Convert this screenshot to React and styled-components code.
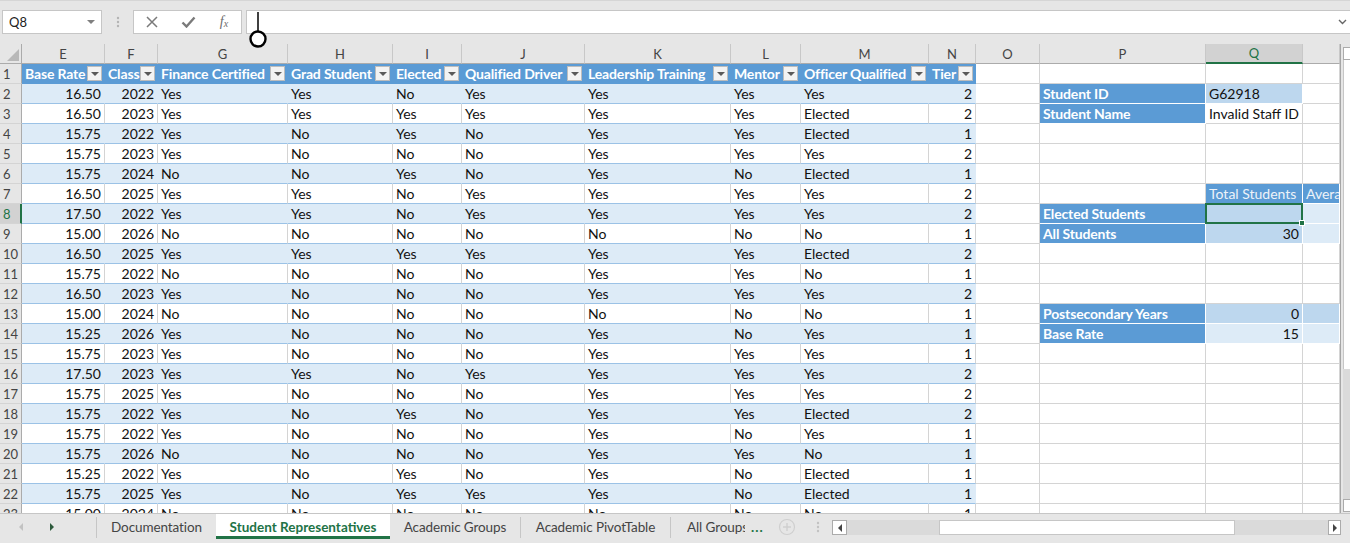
import React from 'react';
import styled, { createGlobalStyle, css } from 'styled-components';

const GlobalStyle = createGlobalStyle`
  html, body { margin: 0; padding: 0; }
  body { font-family: Lato, "Liberation Sans", sans-serif; background: #e6e6e6; }
  * { box-sizing: border-box; }
`;

const COLS = [22, 83, 53, 130, 105, 69, 123, 146, 70, 128, 47, 64, 166, 97, 37];
const LETTERS = ['E', 'F', 'G', 'H', 'I', 'J', 'K', 'L', 'M', 'N', 'O', 'P', 'Q', ''];
const HEADERS = ['Base Rate', 'Class', 'Finance Certified', 'Grad Student', 'Elected', 'Qualified Driver', 'Leadership Training', 'Mentor', 'Officer Qualified', 'Tier'];

const ROWS = [
  ['16.50', '2022', 'Yes', 'Yes', 'No', 'Yes', 'Yes', 'Yes', 'Yes', '2'],
  ['16.50', '2023', 'Yes', 'Yes', 'Yes', 'Yes', 'Yes', 'Yes', 'Elected', '2'],
  ['15.75', '2022', 'Yes', 'No', 'Yes', 'No', 'Yes', 'Yes', 'Elected', '1'],
  ['15.75', '2023', 'Yes', 'No', 'No', 'No', 'Yes', 'Yes', 'Yes', '2'],
  ['15.75', '2024', 'No', 'No', 'Yes', 'No', 'Yes', 'No', 'Elected', '1'],
  ['16.50', '2025', 'Yes', 'Yes', 'No', 'Yes', 'Yes', 'Yes', 'Yes', '2'],
  ['17.50', '2022', 'Yes', 'Yes', 'No', 'Yes', 'Yes', 'Yes', 'Yes', '2'],
  ['15.00', '2026', 'No', 'No', 'No', 'No', 'No', 'No', 'No', '1'],
  ['16.50', '2025', 'Yes', 'Yes', 'Yes', 'Yes', 'Yes', 'Yes', 'Elected', '2'],
  ['15.75', '2022', 'No', 'No', 'No', 'No', 'Yes', 'Yes', 'No', '1'],
  ['16.50', '2023', 'Yes', 'No', 'No', 'No', 'Yes', 'Yes', 'Yes', '2'],
  ['15.00', '2024', 'No', 'No', 'No', 'No', 'No', 'No', 'No', '1'],
  ['15.25', '2026', 'Yes', 'No', 'No', 'No', 'Yes', 'No', 'Yes', '1'],
  ['15.75', '2023', 'Yes', 'No', 'No', 'No', 'Yes', 'Yes', 'Yes', '1'],
  ['17.50', '2023', 'Yes', 'Yes', 'No', 'Yes', 'Yes', 'Yes', 'Yes', '2'],
  ['15.75', '2025', 'Yes', 'No', 'No', 'No', 'Yes', 'Yes', 'Yes', '2'],
  ['15.75', '2022', 'Yes', 'No', 'Yes', 'No', 'Yes', 'Yes', 'Elected', '2'],
  ['15.75', '2022', 'Yes', 'No', 'No', 'No', 'Yes', 'No', 'Yes', '1'],
  ['15.75', '2026', 'No', 'No', 'No', 'No', 'Yes', 'Yes', 'No', '1'],
  ['15.25', '2022', 'Yes', 'No', 'Yes', 'No', 'Yes', 'No', 'Elected', '1'],
  ['15.75', '2025', 'Yes', 'No', 'Yes', 'Yes', 'Yes', 'No', 'Elected', '1'],
  ['15.00', '2024', 'No', 'No', 'No', 'No', 'No', 'No', 'No', '1'],
];
const NUMERIC = [0, 1, 9];

/* ---------- window & formula bar ---------- */
const Window = styled.div`
  position: relative;
  width: 1350px;
  height: 543px;
  display: flex;
  flex-direction: column;
  overflow: hidden;
  background: #e6e6e6;
`;

const FormulaBar = styled.div`
  height: 44px;
  flex: none;
  display: flex;
  align-items: flex-start;
  padding: 9px 0 0 2px;
  border-top: 1px solid #d6d6d6;
`;

const NameBox = styled.div`
  width: 100px;
  height: 24px;
  background: #fff;
  border: 1px solid #c6c6c6;
  display: flex;
  align-items: center;
  justify-content: space-between;
  padding: 0 6px 0 6px;
  font-size: 13px;
  color: #222;
`;

const DropTri = styled.span`
  width: 0;
  height: 0;
  border-left: 4px solid transparent;
  border-right: 4px solid transparent;
  border-top: 4px solid #7f7f7f;
`;

const Grip = styled.div`
  width: ${p => p.$w || 31}px;
  height: ${p => (p.$fill ? 'auto' : '24px')};
  display: flex;
  align-items: center;
  justify-content: center;
  flex: none;
`;

const FxBox = styled.div`
  width: 109px;
  height: 24px;
  background: #fff;
  border: 1px solid #c6c6c6;
  display: grid;
  grid-template-columns: repeat(3, 36px);
  align-items: center;
  justify-items: center;
`;

const FxText = styled.span`
  font-family: "Liberation Serif", serif;
  font-style: italic;
  font-size: 14px;
  color: #6d6d6d;
  & sub { font-size: 10px; vertical-align: -1px; }
`;

const FormulaInput = styled.div`
  flex: 1;
  height: 24px;
  margin-left: 4px;
  background: #fff;
  border: 1px solid #c6c6c6;
  border-right: none;
  display: flex;
  align-items: center;
  justify-content: flex-end;
  padding-right: 3px;
`;

const TouchCursor = styled.svg`
  position: absolute;
  left: 248px;
  top: 10px;
  pointer-events: none;
  z-index: 10;
`;

/* ---------- sheet ---------- */
const SheetArea = styled.div`
  flex: 1;
  display: flex;
  min-height: 0;
`;

const Grid = styled.div`
  display: grid;
  grid-template-columns: ${COLS.map(c => c + 'px').join(' ')};
  grid-auto-rows: 20px;
  align-content: start;
  width: 1341px;
  flex: none;
  height: 100%;
  overflow: hidden;
  background: #fff;
  border-right: 1px solid #a6a6a6;
`;

const headBase = css`
  background: #e6e6e6;
  color: #444;
  font-size: 13px;
  display: flex;
  align-items: center;
  white-space: nowrap;
`;

const Corner = styled.div`
  ${headBase};
  border-right: 1px solid #ababab;
  border-bottom: 1px solid #ababab;
  justify-content: flex-end;
  align-items: flex-end;
  padding: 0 2px 2px 0;
`;

const ColHead = styled.div`
  ${headBase};
  justify-content: center;
  border-right: 1px solid #c8c8c8;
  border-bottom: ${p => (p.$sel ? '2px solid #217346' : '1px solid #ababab')};
  ${p => p.$sel && css`background: #d2d2d2; color: #217346;`}
`;

const RowHead = styled.div`
  ${headBase};
  padding-left: 3px;
  border-bottom: 1px solid #d4d4d4;
  border-right: ${p => (p.$sel ? '2px solid #217346' : '1px solid #ababab')};
  ${p => p.$sel && css`background: #d2d2d2; color: #217346;`}
`;

const cellBase = css`
  position: relative;
  display: flex;
  align-items: center;
  padding: 0 3px;
  font-size: 14px;
  color: #111;
  white-space: nowrap;
  overflow: hidden;
  border-right: 1px solid #d4d4d4;
  border-bottom: 1px solid #d4d4d4;
  justify-content: ${p => (p.$num ? 'flex-end' : 'flex-start')};
`;

const boldText = css`
  font-weight: 700;
  font-size: 14px;
  letter-spacing: -0.15px;
  color: #fff;
`;

const Cell = styled.div`
  ${cellBase};
  background: #fff;
`;

const THead = styled.div`
  ${cellBase};
  ${boldText};
  padding-right: 2px;
  background: #5b9bd5;
  border-right-color: #5b9bd5;
  border-bottom-color: #5b9bd5;
`;

const FilterBtn = styled.span`
  width: 15px;
  height: 15px;
  flex: none;
  margin-left: auto;
  background: #f3f3f3;
  border: 1px solid #bdbdbd;
  display: flex;
  align-items: center;
  justify-content: center;
  &::after {
    content: '';
    border-left: 4px solid transparent;
    border-right: 4px solid transparent;
    border-top: 4px solid #5a5a5a;
  }
`;

const TCell = styled.div`
  ${cellBase};
  background: ${p => (p.$band ? '#ddebf7' : '#fff')};
  border-right-color: ${p => (p.$band ? '#ddebf7' : '#d4d4d4')};
  border-bottom-color: #9bc2e6;
`;

const Label = styled.div`
  ${cellBase};
  ${boldText};
  background: #5b9bd5;
  border-right-color: #fff;
  border-bottom-color: #fff;
`;

const SubHead = styled.div`
  ${cellBase};
  background: #5b9bd5;
  color: #eef3f9;
  border-right-color: #fff;
  border-bottom-color: #fff;
`;

const Val = styled.div`
  ${cellBase};
  background: ${p => (p.$tone === 'mid' ? '#bdd7ee' : '#ddebf7')};
  border-right-color: #fff;
  border-bottom-color: #fff;
  ${p => p.$sel && css`overflow: visible; z-index: 3;`}
`;

const SelectionBox = styled.span`
  position: absolute;
  left: -1px;
  top: -1px;
  right: -1px;
  bottom: -1px;
  border: 2px solid #217346;
  pointer-events: none;
`;

const FillHandle = styled.span`
  position: absolute;
  right: -3px;
  bottom: -3px;
  width: 6px;
  height: 6px;
  background: #217346;
  border: 1px solid #fff;
`;

/* vertical scrollbar */
const VScroll = styled.div`
  flex: 1;
  display: flex;
  flex-direction: column;
  padding: 3px 0 1px 2px;
`;

const VArrow = styled.div`
  height: 13px;
  flex: none;
  background: #fff;
  border: 1px solid #ababab;
  border-right: none;
`;

const VThumb = styled.div`
  height: 309px;
  flex: none;
  background: #fff;
  border-left: 1px solid #c6c6c6;
`;

const VTrack = styled.div`
  flex: 1;
  background: #dadada;
`;

/* ---------- tab bar ---------- */
const TabBar = styled.div`
  height: 30px;
  flex: none;
  display: flex;
  align-items: stretch;
  border-top: 1px solid #c6c6c6;
  padding-bottom: 4px;
  background: #e6e6e6;
`;

const TabStrip = styled.div`
  width: 832px;
  flex: none;
  display: flex;
  align-items: stretch;
  overflow: hidden;
`;

const Nav = styled.div`
  width: 96px;
  flex: none;
  display: flex;
  align-items: center;
  padding-left: 19px;
  gap: 27px;
`;

const NavTri = styled.span`
  width: 0;
  height: 0;
  border-top: 4px solid transparent;
  border-bottom: 4px solid transparent;
  ${p => (p.$dir === 'left'
    ? css`border-right: 4px solid ${p.$on ? '#2d5a3c' : '#c2c2c2'};`
    : css`border-left: 4px solid ${p.$on ? '#2d5a3c' : '#c2c2c2'};`)}
`;

const Divider = styled.span`
  width: 1px;
  flex: none;
  margin: 3px 0 1px;
  background: #c6c6c6;
`;

const Tab = styled.div`
  width: ${p => p.$w}px;
  flex: none;
  display: flex;
  align-items: center;
  justify-content: ${p => (p.$start ? 'flex-start' : 'center')};
  padding-left: ${p => (p.$start ? '16px' : '0')};
  font-size: 13.5px;
  letter-spacing: -0.1px;
  color: #444;
  white-space: nowrap;
  overflow: hidden;
  ${p => p.$active && css`
    background: #fff;
    color: #217346;
    font-weight: 700;
    letter-spacing: 0;
    border-bottom: 3px solid #217346;
    padding-top: 3px;
  `}
`;

const Clip = styled.span`
  max-width: ${p => p.$max}px;
  overflow: hidden;
`;

const More = styled.span`
  color: #217346;
  font-weight: 700;
  margin-left: 6px;
  letter-spacing: 1px;
`;

const HScroll = styled.div`
  width: 509px;
  height: 15px;
  flex: none;
  margin-top: 6px;
  display: flex;
  background: #dadada;
`;

const HArrow = styled.div`
  width: ${p => p.$w}px;
  flex: none;
  background: #fff;
  border: 1px solid #ababab;
  display: flex;
  align-items: center;
  justify-content: center;
`;

const HTrack = styled.div`
  flex: 1;
  display: flex;
  padding-left: 92px;
`;

const HThumb = styled.div`
  width: 296px;
  background: #fff;
  border: 1px solid #c6c6c6;
`;

/* ---------- icons ---------- */
const Dots = ({ color = '#b4b4b4' }) => (
  <svg width="4" height="12" viewBox="0 0 4 12">
    <circle cx="2" cy="2" r="1.2" fill={color} />
    <circle cx="2" cy="6" r="1.2" fill={color} />
    <circle cx="2" cy="10" r="1.2" fill={color} />
  </svg>
);

const Tri = ({ dir }) => (
  <svg width="6" height="8" viewBox="0 0 6 8">
    {dir === 'left' ? <path d="M5 0L1 4L5 8Z" fill="#444" /> : <path d="M1 0L5 4L1 8Z" fill="#444" />}
  </svg>
);

/* ---------- right panel ---------- */
function rightCells(r) {
  const O = <Cell key="o" />;
  switch (r) {
    case 2:
      return [O, <Label key="p">Student ID</Label>, <Val key="q" $tone="mid">G62918</Val>, <Cell key="r" />];
    case 3:
      return [O, <Label key="p">Student Name</Label>, <Cell key="q">Invalid Staff ID</Cell>, <Cell key="r" />];
    case 7:
      return [O, <Cell key="p" />, <SubHead key="q">Total Students</SubHead>, <SubHead key="r">Average Base Rate</SubHead>];
    case 8:
      return [O, <Label key="p">Elected Students</Label>,
        <Val key="q" $tone="mid" $sel><SelectionBox /><FillHandle /></Val>,
        <Val key="r" $tone="light" />];
    case 9:
      return [O, <Label key="p">All Students</Label>, <Val key="q" $tone="mid" $num>30</Val>, <Val key="r" $tone="light" />];
    case 13:
      return [O, <Label key="p">Postsecondary Years</Label>, <Val key="q" $tone="mid" $num>0</Val>, <Val key="r" $tone="mid" />];
    case 14:
      return [O, <Label key="p">Base Rate</Label>, <Val key="q" $tone="light" $num>15</Val>, <Val key="r" $tone="light" />];
    default:
      return [O, <Cell key="p" />, <Cell key="q" />, <Cell key="r" />];
  }
}

export default function App() {
  const rowNums = Array.from({ length: 23 }, (_, i) => i + 1);
  return (
    <>
      <GlobalStyle />
      <Window>
        <FormulaBar>
          <NameBox>Q8<DropTri /></NameBox>
          <Grip><Dots /></Grip>
          <FxBox>
            <svg width="12" height="12" viewBox="0 0 12 12">
              <path d="M1 1L11 11M11 1L1 11" stroke="#7a7a7a" strokeWidth="1.5" />
            </svg>
            <svg width="15" height="12" viewBox="0 0 15 12">
              <path d="M1.5 6.5L5.5 10.5L13.5 1.5" stroke="#7a7a7a" strokeWidth="2.4" fill="none" />
            </svg>
            <FxText>f<sub>x</sub></FxText>
          </FxBox>
          <FormulaInput>
            <svg width="9" height="6" viewBox="0 0 9 6">
              <path d="M1 1L4.5 4.5L8 1" stroke="#666" strokeWidth="1.4" fill="none" />
            </svg>
          </FormulaInput>
        </FormulaBar>

        <TouchCursor width="22" height="40" viewBox="0 0 22 40">
          <line x1="10" y1="2" x2="10" y2="22" stroke="#000" strokeWidth="1.5" />
          <circle cx="10" cy="29" r="7.5" fill="#fff" stroke="#000" strokeWidth="2.4" />
        </TouchCursor>

        <SheetArea>
          <Grid>
            <Corner>
              <svg width="12" height="12" viewBox="0 0 12 12"><path d="M12 0V12H0Z" fill="#b8b8b8" /></svg>
            </Corner>
            {LETTERS.map((l, i) => <ColHead key={i} $sel={l === 'Q'}>{l}</ColHead>)}
            {rowNums.map(r => (
              <React.Fragment key={r}>
                <RowHead $sel={r === 8}>{r}</RowHead>
                {r === 1
                  ? HEADERS.map(h => <THead key={h}>{h}<FilterBtn /></THead>)
                  : ROWS[r - 2].map((v, i) => (
                    <TCell key={i} $band={r % 2 === 0} $num={NUMERIC.includes(i)}>{v}</TCell>
                  ))}
                {rightCells(r)}
              </React.Fragment>
            ))}
          </Grid>
          <VScroll>
            <VArrow />
            <VThumb />
            <VTrack />
            <VArrow />
          </VScroll>
        </SheetArea>

        <TabBar>
          <TabStrip>
            <Nav>
              <NavTri $dir="left" />
              <NavTri $dir="right" $on />
            </Nav>
            <Divider />
            <Tab $w={119}>Documentation</Tab>
            <Tab $w={174} $active>Student Representatives</Tab>
            <Tab $w={130}>Academic Groups</Tab>
            <Divider />
            <Tab $w={149}>Academic PivotTable</Tab>
            <Divider />
            <Tab $w={104} $start><Clip $max={58}>All Groups</Clip><More>...</More></Tab>
            <Grip $w={24} $fill>
              <svg width="18" height="18" viewBox="0 0 18 18">
                <circle cx="9" cy="9" r="7.5" fill="none" stroke="#cfcfcf" strokeWidth="1.2" />
                <path d="M9 5V13M5 9H13" stroke="#cfcfcf" strokeWidth="1.4" />
              </svg>
            </Grip>
            <Grip $w={38} $fill><Dots color="#c2c2c2" /></Grip>
          </TabStrip>
          <HScroll>
            <HArrow $w={15}><Tri dir="left" /></HArrow>
            <HTrack><HThumb /></HTrack>
            <HArrow $w={13}><Tri dir="right" /></HArrow>
          </HScroll>
        </TabBar>
      </Window>
    </>
  );
}
